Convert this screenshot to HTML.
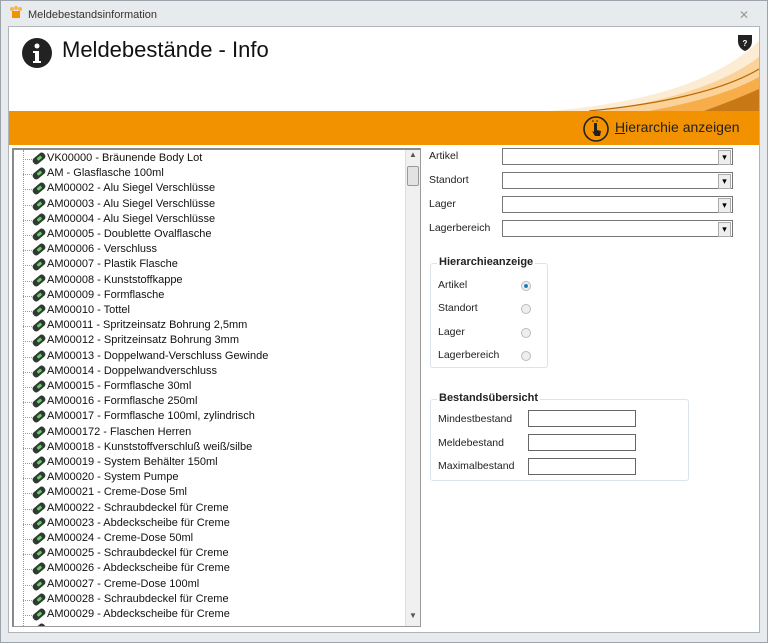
<!DOCTYPE html>
<html><head><meta charset="utf-8"><style>
*{margin:0;padding:0;box-sizing:border-box}
body{width:768px;height:643px;background:#b9bdc3;font-family:"Liberation Sans",Arial,sans-serif;position:relative;overflow:hidden}
.win{position:absolute;left:0;top:0;width:768px;height:643px;background:#e8ebee;box-shadow:inset 0 0 0 1px #9da3ab}
.title{position:absolute;left:28px;top:9px;font-size:11px;color:#333}
.client{position:absolute;left:8px;top:26px;width:752px;height:607px;background:#fff;border:1px solid #b0b5bb}
.hdr{position:absolute;left:0;top:0;width:750px;height:84px;background:#fff;overflow:hidden}
.bar{position:absolute;left:0;top:84px;width:750px;height:34px;background:#f39200}
.list{position:absolute;left:3px;top:121px;width:409px;height:479px;border:1px solid #9a9a9a;background:#fff;overflow:hidden;border-left:2px solid #8a8a8a;border-top:2px solid #8a8a8a}
.row{position:absolute;left:33px;font-size:11px;color:#111;white-space:nowrap}
.ic{position:absolute;left:18px;width:14px;height:7px;background:#2f3a33;border-radius:3px;transform:rotate(-40deg)}
.ic:after{content:"";position:absolute;left:5px;top:2px;width:5px;height:3px;background:#6c6;border-radius:1px}
.ln{position:absolute;left:9px;width:9px;border-top:1px dotted #999}
.sb{position:absolute;right:0;top:0;width:15px;height:100%;background:#f0f0f0;border-left:1px solid #ddd}
.lbl{position:absolute;font-size:10.5px;color:#222}
.cb{position:absolute;left:493px;width:231px;height:17px;border:1px solid #777;background:#fff}
.cb:after{content:"▾";position:absolute;right:1px;top:1px;width:11px;height:13px;background:#eee;border:1px solid #aaa;font-size:9px;text-align:center;line-height:12px}
.grp{position:absolute;border:1px solid #dde3ea;border-radius:3px}
.gt{position:absolute;top:-8px;left:6px;background:#fff;padding:0 2px;font-size:11px;font-weight:bold;color:#222}
.rad{position:absolute;width:10px;height:10px;border:1px solid #bbb;border-radius:50%;background:#eee}
.tb{position:absolute;left:519px;width:108px;height:17px;border:1px solid #666;background:#fff}
</style></head><body>
<div class="win">
<svg style="position:absolute;left:9px;top:6px" width="14" height="14"><rect x="3" y="5" width="8" height="7" fill="#f39200"/><circle cx="3" cy="3" r="2" fill="#f7b44a"/><circle cx="7" cy="2" r="2" fill="#f7b44a"/><circle cx="11" cy="3" r="2" fill="#f7b44a"/></svg>
<div class="title">Meldebestandsinformation</div>
<div style="position:absolute;left:739px;top:8px;font-size:12px;color:#999">✕</div>
<div class="client">
 <div class="hdr">
  <svg style="position:absolute;left:12px;top:10px" width="32" height="32"><circle cx="16" cy="16" r="15" fill="#222"/><circle cx="16" cy="9" r="2.5" fill="#fff"/><path d="M12 14h6v10h2v2h-8v-2h2v-8h-2z" fill="#fff"/></svg>
  <div style="position:absolute;left:53px;top:10px;font-size:22px;color:#111">Meldebestände - Info</div>
  <svg style="position:absolute;left:0;top:0" width="750" height="84">
   <path d="M540 84 Q690 72 750 14 V84Z" fill="#fdecd4"/>
   <path d="M590 84 Q700 68 750 30 V84Z" fill="#fbd39a"/>
   <path d="M640 84 Q715 70 750 50 V84Z" fill="#f6ad4a"/>
   <path d="M580 84 Q700 72 750 42" stroke="#b86a00" stroke-width="1.2" fill="none"/>
   <path d="M695 84 Q728 72 750 62 V84Z" fill="#c87814"/>
   <path d="M729 8 h14 v6 q0 7 -7 10 q-7 -3 -7 -10z" fill="#222"/>
   <text x="736" y="19" font-size="8" fill="#fff" text-anchor="middle" font-weight="bold" font-family="Liberation Sans">?</text>
  </svg>
 </div>
 <div class="bar">
  <svg style="position:absolute;left:574px;top:5px" width="26" height="26"><circle cx="13" cy="13" r="12" fill="none" stroke="#222" stroke-width="1.6"/><path d="M11 7v9l-2-1 3 5h5l1-5-4-1v-7z" fill="#222"/><circle cx="10" cy="5" r="0.8" fill="#222"/><circle cx="14" cy="5" r="0.8" fill="#222"/></svg>
  <div style="position:absolute;left:606px;top:8px;font-size:14px;color:#222"><u>H</u>ierarchie anzeigen</div>
 </div>
 <div class="list">
  <div class="sb"><div style="position:absolute;top:0;left:0;width:14px;height:15px;font-size:8px;text-align:center;color:#555">▲</div><div style="position:absolute;top:16px;left:1px;width:12px;height:20px;background:#e2e2e2;border:1px solid #999;border-radius:2px"></div><div style="position:absolute;bottom:0;left:0;width:14px;height:15px;font-size:8px;text-align:center;color:#555">▼</div></div>
  <div style="position:absolute;left:9px;top:0;height:100%;border-left:1px dotted #999"></div>
  <div id="rows"></div>
 </div>
 <div class="lbl" style="left:420px;top:123px">Artikel</div>
 <div class="lbl" style="left:420px;top:147px">Standort</div>
 <div class="lbl" style="left:420px;top:171px">Lager</div>
 <div class="lbl" style="left:420px;top:195px">Lagerbereich</div>
 <div class="cb" style="top:121px"></div>
 <div class="cb" style="top:145px"></div>
 <div class="cb" style="top:169px"></div>
 <div class="cb" style="top:193px"></div>
 <div class="grp" style="left:421px;top:236px;width:118px;height:105px">
  <div class="gt">Hierarchieanzeige</div>
  <div class="lbl" style="left:7px;top:15px">Artikel</div>
  <div class="lbl" style="left:7px;top:38px">Standort</div>
  <div class="lbl" style="left:7px;top:62px">Lager</div>
  <div class="lbl" style="left:7px;top:85px">Lagerbereich</div>
  <div class="rad" style="left:90px;top:17px;background:radial-gradient(#1f77b4 30%,#eee 40%)"></div>
  <div class="rad" style="left:90px;top:40px"></div>
  <div class="rad" style="left:90px;top:64px"></div>
  <div class="rad" style="left:90px;top:87px"></div>
 </div>
 <div class="grp" style="left:421px;top:372px;width:259px;height:82px">
  <div class="gt">Bestandsübersicht</div>
  <div class="lbl" style="left:7px;top:13px">Mindestbestand</div>
  <div class="lbl" style="left:7px;top:37px">Meldebestand</div>
  <div class="lbl" style="left:7px;top:60px">Maximalbestand</div>
 </div>
 <div class="tb" style="top:383px"></div>
 <div class="tb" style="top:407px"></div>
 <div class="tb" style="top:431px"></div>
</div>
</div>
<script>
var items=["VK00000 - Bräunende Body Lot","AM - Glasflasche 100ml","AM00002 - Alu Siegel Verschlüsse","AM00003 - Alu Siegel Verschlüsse","AM00004 - Alu Siegel Verschlüsse","AM00005 - Doublette Ovalflasche","AM00006 - Verschluss","AM00007 - Plastik Flasche","AM00008 - Kunststoffkappe","AM00009 - Formflasche","AM00010 - Tottel","AM00011 - Spritzeinsatz Bohrung 2,5mm","AM00012 - Spritzeinsatz Bohrung 3mm","AM00013 - Doppelwand-Verschluss Gewinde","AM00014 - Doppelwandverschluss","AM00015 - Formflasche 30ml","AM00016 - Formflasche 250ml","AM00017 - Formflasche 100ml, zylindrisch","AM000172 - Flaschen Herren","AM00018 - Kunststoffverschluß weiß/silbe","AM00019 - System Behälter 150ml","AM00020 - System Pumpe","AM00021 - Creme-Dose 5ml","AM00022 - Schraubdeckel für Creme","AM00023 - Abdeckscheibe für Creme","AM00024 - Creme-Dose 50ml","AM00025 - Schraubdeckel für Creme","AM00026 - Abdeckscheibe für Creme","AM00027 - Creme-Dose 100ml","AM00028 - Schraubdeckel für Creme","AM00029 - Abdeckscheibe für Creme",""];
var h="";for(var i=0;i<items.length;i++){var y=2+i*15.2;h+='<div class="ln" style="top:'+(y+7)+'px"></div><div class="ic" style="top:'+(y+3)+'px"></div><div class="row" style="top:'+y+'px">'+items[i]+'</div>';}
document.getElementById("rows").innerHTML=h;
</script>
</body></html>
